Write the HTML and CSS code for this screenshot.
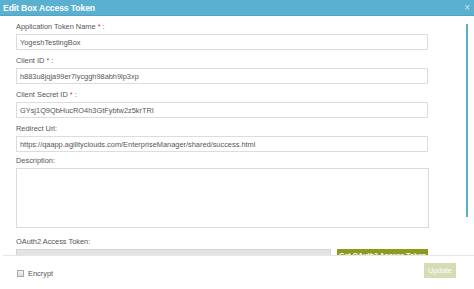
FILE: index.html
```html
<!DOCTYPE html>
<html lang="en">
<head>
    <meta charset="UTF-8">
    <title>Edit Box Access Token</title>
    <link rel="stylesheet" href="styles.css">
</head>
<body>
    <div class="dialog">
        <div class="dialog-header">
            <span class="dialog-title">Edit Box Access Token</span>
            <span class="dialog-close">&times;</span>
        </div>

        <div class="dialog-body">
            <div class="scroll-thumb"></div>
            <div class="form">
                <div class="field">
                    <label>Application Token Name <span class="req">*</span> :</label>
                    <input class="text-input" type="text" value="YogeshTestingBox">
                </div>
                <div class="field">
                    <label>Client ID <span class="req">*</span> :</label>
                    <input class="text-input" type="text" value="h883u8jqja99er7lycggh98abh9lp3xp">
                </div>
                <div class="field">
                    <label>Client Secret ID <span class="req">*</span> :</label>
                    <input class="text-input" type="text" value="GYsj1Q9QbHucRO4h3GtFybtw2z5krTRI">
                </div>
                <div class="field">
                    <label>Redirect Url:</label>
                    <input class="text-input" type="text" value="https://qaapp.agilityclouds.com/EnterpriseManager/shared/success.html">
                </div>
                <div class="field field-desc">
                    <label>Description:</label>
                    <textarea class="text-area"></textarea>
                </div>
                <div class="field field-token">
                    <label>OAuth2 Access Token:</label>
                    <div class="token-row">
                        <input class="text-input token-input" type="text" disabled>
                        <button class="btn-token">Get OAuth2 Access Token</button>
                    </div>
                </div>
            </div>
        </div>

        <div class="dialog-footer">
            <label class="check">
                <span class="check-box"></span>
                Encrypt
            </label>
            <button class="btn-update">Update</button>
        </div>
    </div>
</body>
</html>
```

FILE: styles.css
```css
body {
    margin: 0;
    padding: 0;
    font-family: "Liberation Sans", Arial, sans-serif;
    background-color: #fff;
}
.dialog {
    width: 474px;
    height: 289px;
    display: flex;
    flex-direction: column;
    overflow: hidden;
}
.dialog-header {
    height: 15px;
    background-color: #5ab0d0;
    border-bottom: 1px solid #4fa3c4;
    display: flex;
    align-items: center;
    justify-content: space-between;
    padding: 0 4px 0 3px;
    color: #fff;
}
.dialog-title {
    font-size: 8.6px;
    font-weight: bold;
    letter-spacing: -0.1px;
}
.dialog-close {
    font-size: 10px;
    color: #cde6f0;
    line-height: 10px;
}
.dialog-body {
    height: 239px;
    overflow: hidden;
    position: relative;
    border-bottom: 1px solid #e6e6e6;
    margin-left: 3px;
}
.scroll-thumb {
    position: absolute;
    left: 463px;
    top: 8px;
    width: 2px;
    height: 193px;
    background-color: #5aafcf;
}
.form {
    padding: 6px 0 0 13px;
    width: 413px;
}
.field {
    margin-bottom: 6px;
}
.field label {
    display: block;
    font-size: 7.4px;
    line-height: 10px;
    color: #555;
    margin-bottom: 2px;
}
.req {
    color: #e0302a;
}
.text-input {
    display: block;
    box-sizing: border-box;
    width: 412px;
    height: 16px;
    margin: 0;
    padding: 0 3px;
    border: 1px solid #dcdcdc;
    font-family: "Liberation Sans", Arial, sans-serif;
    font-size: 7.4px;
    color: #555;
    background: #fff;
    outline: none;
}
.text-area {
    display: block;
    box-sizing: border-box;
    width: 413px;
    height: 60px;
    margin: 0;
    border: 1px solid #dcdcdc;
    resize: none;
}
.field-desc {
    margin-top: -2px;
    margin-bottom: 9px;
}
.token-row {
    display: flex;
    gap: 6px;
}
.token-input {
    width: 315px;
    background-color: #e4e4e4;
    border-color: #d4d4d4;
}
.btn-token {
    width: 91px;
    height: 16px;
    border: none;
    margin: 0;
    background-color: #8c9b1d;
    color: #fff;
    font-family: "Liberation Sans", Arial, sans-serif;
    font-size: 7.2px;
    font-weight: bold;
    letter-spacing: -0.1px;
    white-space: nowrap;
    padding: 0 0 4px;
}
.dialog-footer {
    flex: 1;
    display: flex;
    align-items: flex-start;
    justify-content: space-between;
    padding: 7px 18px 0 17px;
}
.check {
    display: flex;
    align-items: center;
    gap: 4px;
    font-size: 7.4px;
    color: #555;
    margin-top: 6px;
}
.check-box {
    box-sizing: border-box;
    width: 7px;
    height: 7px;
    border: 1px solid #a9a9a9;
    background: linear-gradient(to bottom, #f4f4f4, #dcdcdc);
}
.btn-update {
    width: 32px;
    height: 15px;
    border: none;
    padding: 0;
    background-color: #d5ddb4;
    color: #fff;
    font-family: "Liberation Sans", Arial, sans-serif;
    font-size: 7.4px;
}
```
